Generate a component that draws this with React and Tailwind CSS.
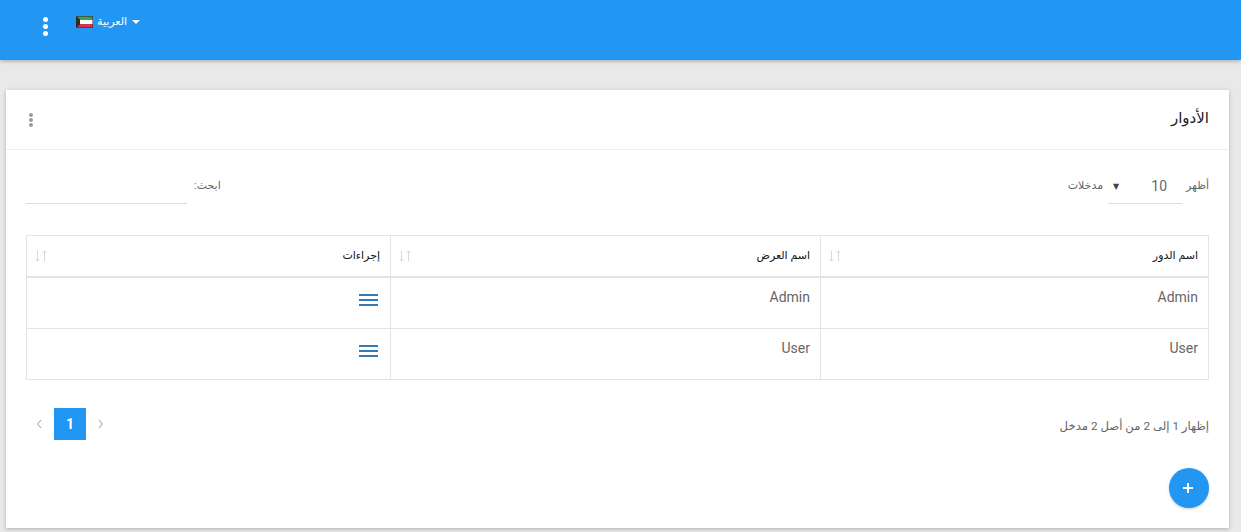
import React from "react";

function Dots({ className }) {
  return (
    <div className={"flex flex-col items-center " + className}>
      <span className="block rounded-full bg-current w-[5px] h-[5px]" />
      <span className="block rounded-full bg-current w-[5px] h-[5px]" />
      <span className="block rounded-full bg-current w-[5px] h-[5px]" />
    </div>
  );
}

function Flag() {
  return (
    <svg width="17" height="12" viewBox="0 0 17 12" className="block">
      <rect width="17" height="12" fill="#2b2b2b" />
      <rect x="0.5" y="0.5" width="16" height="3.5" fill="#3f9a5c" />
      <rect x="0.5" y="4" width="16" height="4" fill="#fff" />
      <rect x="0.5" y="8" width="16" height="3.5" fill="#d8324a" />
      <polygon points="0,0 4,3.5 4,8.5 0,12" fill="#2b2b2b" />
    </svg>
  );
}

function Sort() {
  return (
    <svg width="14" height="14" viewBox="0 0 14 14" className="block" fill="none" stroke="#d9d9d9" strokeWidth="1">
      <path d="M3.5 1.5V12M1.5 10l2 2.2 2-2.2" />
      <path d="M10.5 12.5V2M8.5 4l2-2.2 2 2.2" />
    </svg>
  );
}

function Menu() {
  return (
    <div className="flex flex-col gap-[3px] w-[19px]">
      <span className="block h-[2px] bg-[#337ab7]" />
      <span className="block h-[2px] bg-[#337ab7]" />
      <span className="block h-[2px] bg-[#337ab7]" />
    </div>
  );
}

function Chevron({ d }) {
  return (
    <svg width="7" height="10" viewBox="0 0 7 10" fill="none" stroke="#bdbdbd" strokeWidth="1.2" className="block">
      <path d={d} />
    </svg>
  );
}

function Head({ children, w }) {
  return (
    <th className={"border border-[#e4e4e4] border-b-2 h-[41px] p-0 font-normal " + w}>
      <div className="flex items-center justify-between pr-[10px] pl-[7px]">
        <span className="text-[11px] text-[#111]">{children}</span>
        <Sort />
      </div>
    </th>
  );
}

function Row({ a, b, h }) {
  return (
    <tr className={h}>
      <td className="border border-[#e4e4e4] align-top pt-[9px] pr-[10px] text-[14px] text-[#666] text-right">{a}</td>
      <td className="border border-[#e4e4e4] align-top pt-[9px] pr-[10px] text-[14px] text-[#666] text-right">{b}</td>
      <td className="border border-[#e4e4e4] align-top pt-[16px] pr-[12px]">
        <Menu />
      </td>
    </tr>
  );
}

export default function App() {
  return (
    <div className="min-h-[532px] bg-[#e9e9e9] font-['Roboto','DejaVu_Sans',sans-serif] overflow-hidden">
      <header className="h-[60px] bg-[#2196f3] shadow-[0_1px_4px_rgba(0,0,0,0.3)] flex items-start pl-[42px] pt-[16px] text-white">
        <Dots className="w-[6px] gap-[2px] mt-[1px] text-white" />
        <div className="flex items-center gap-[4px] ml-[28px]">
          <Flag />
          <span className="text-[11px] leading-[12px]">العربية</span>
          <span className="ml-[1px] border-x-[4px] border-x-transparent border-t-[4px] border-t-white" />
        </div>
      </header>
      <main className="ml-[6px] mr-[12px] mt-[30px] h-[438px] bg-white shadow-[0_1px_4px_rgba(0,0,0,0.25)] relative" dir="rtl">
        <div className="h-[60px] border-b border-[#eeeeee] flex items-center justify-between pr-[20px] pl-[23px]">
          <h1 className="text-[15px] text-[#222] font-normal -mt-[2px]">الأدوار</h1>
          <Dots className="text-[#999] gap-[1px] [&>span]:w-[4px] [&>span]:h-[4px]" />
        </div>
        <div className="px-[20px]">
          <div className="flex justify-between pt-[20px] text-[11px] text-[#666] h-[85px]">
            <div className="flex items-start">
              <span className="mt-[8px]">أظهر</span>
              <div className="mx-[4px] w-[74px] h-[34px] border-b border-[#ddd] flex items-center justify-between pr-[15px] pl-[5px]">
                <span className="text-[14px] text-[#666]">10</span>
                <span className="text-[8px] text-[#444]">▼</span>
              </div>
              <span className="mt-[8px] mr-[1px]">مدخلات</span>
            </div>
            <div className="flex items-start">
              <span className="mt-[8px]">ابحث:</span>
              <div className="mr-[7px] w-[161px] h-[34px] border-b border-[#ddd]" />
            </div>
          </div>
          <table className="w-[1182px] border-collapse table-fixed">
            <thead>
              <tr>
                <Head w="w-[388px]">اسم الدور</Head>
                <Head w="w-[430px]">اسم العرض</Head>
                <Head w="w-[364px]">إجراءات</Head>
              </tr>
            </thead>
            <tbody>
              <Row a="Admin" b="Admin" h="h-[52px]" />
              <Row a="User" b="User" h="h-[51px]" />
            </tbody>
          </table>
          <div className="flex items-center justify-between mt-[28px]">
            <span className="text-[11.7px] text-[#666] mt-[5px]">إظهار 1 إلى 2 من أصل 2 مدخل</span>
            <div className="flex items-center pl-[10px]" dir="ltr">
              <Chevron d="M5 1 1.5 5 5 9" />
              <span className="mx-[11px] w-[32px] h-[32px] bg-[#2196f3] text-white font-bold text-[14px] flex items-center justify-center">1</span>
              <Chevron d="M2 1 5.5 5 2 9" />
            </div>
          </div>
        </div>
        <button className="absolute right-[20px] bottom-[20px] w-[40px] h-[40px] rounded-full bg-[#2196f3] text-white flex items-center justify-center shadow-[0_1px_3px_rgba(0,0,0,0.2)]">
          <svg width="12" height="12" viewBox="0 0 12 12" fill="none" stroke="white" strokeWidth="2" className="mr-[3px] mb-[1px]"><path d="M6 1v10M1 6h10" /></svg>
        </button>
      </main>
    </div>
  );
}
